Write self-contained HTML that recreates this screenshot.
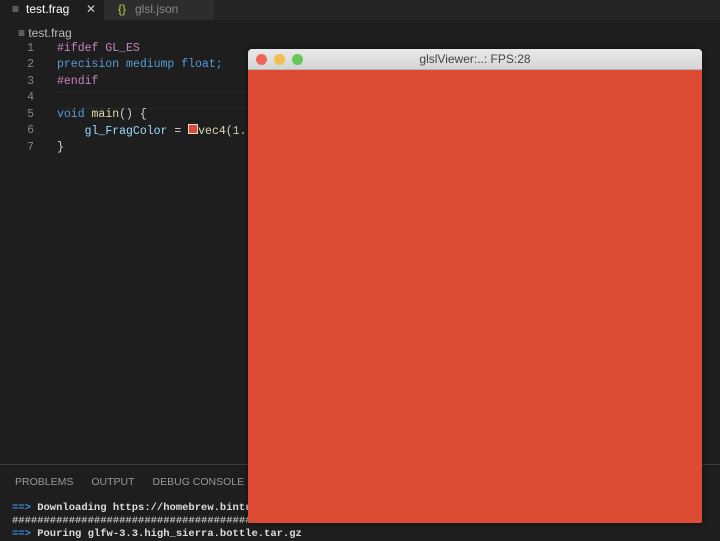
<!DOCTYPE html>
<html><head><style>
body{margin:0;width:720px;height:535px;background:#1e1e1e;overflow:hidden;position:relative;font-family:"Liberation Sans",sans-serif}
.tabs{position:absolute;left:0;top:0;width:720px;height:20px;background:#252526}
.tab{position:absolute;top:0;height:20px;font-size:12px;line-height:19px}
.code{position:absolute;left:0;top:42px;font-family:"Liberation Mono",monospace;font-size:11.5px}
.ln{position:absolute;left:0;width:34px;text-align:right;color:#858585}
.l{position:absolute;left:57px;white-space:pre;color:#d4d4d4}
.k{color:#569cd6}.p{color:#c586c0}.f{color:#dcdcaa}
</style></head><body>
<div class="tabs">
<div class="tab" style="left:0;width:104px;background:#1e1e1e;color:#fff"><span style="position:absolute;left:12px;color:#aaa">≡</span><span style="position:absolute;left:26px">test.frag</span><span style="position:absolute;left:86px;color:#ccc">✕</span></div>
<div class="tab" style="left:104px;width:110px;background:#2d2d2d;color:#888"><span style="position:absolute;left:14px;color:#cbcb41">{}</span><span style="position:absolute;left:31px">glsl.json</span></div>
</div>
<div style="position:absolute;left:18px;top:26px;font-size:12px;color:#bbb"><span style="color:#aaa">≡</span> test.frag</div>
<div style="position:absolute;left:57px;top:91px;width:200px;height:16px;border-top:1px solid #282828;border-bottom:1px solid #282828"></div>
<div class="code">
<div class="ln" style="top:0">1</div><div class="l p" style="top:0">#ifdef GL_ES</div>
<div class="ln" style="top:16px">2</div><div class="l k" style="top:16px">precision mediump float;</div>
<div class="ln" style="top:33px">3</div><div class="l p" style="top:33px">#endif</div>
<div class="ln" style="top:49px">4</div>
<div class="ln" style="top:66px">5</div><div class="l" style="top:66px"><span class="k">void</span> <span class="f">main</span>() {</div>
<div class="ln" style="top:82px">6</div><div class="l" style="top:82px">    <span style="color:#9cdcfe">gl_FragColor</span> = <span style="display:inline-block;width:8px;height:8px;background:#e04a35;border:1px solid #ddd"></span><span class="f">vec4</span>(<span style="color:#b5cea8">1.</span>,</div>
<div class="ln" style="top:99px">7</div><div class="l" style="top:99px">}</div>
</div>
<div style="position:absolute;left:0;top:464px;width:720px;height:1px;background:#3c3c3c"></div>
<div style="position:absolute;left:15px;top:476px;font-size:10.5px;color:#999;word-spacing:0">PROBLEMS<span style="margin-left:18px">OUTPUT</span><span style="margin-left:18px">DEBUG CONSOLE</span></div>
<div style="position:absolute;left:12px;top:502px;font-family:'Liberation Mono',monospace;font-size:10.5px;color:#ddd;line-height:13px;white-space:pre;font-weight:bold"><span style="color:#3b8eea">==&gt;</span> Downloading https://homebrew.bintray.com
<span style="font-weight:normal">##############################################################################  100.0%</span>
<span style="color:#3b8eea">==&gt;</span> Pouring glfw-3.3.high_sierra.bottle.tar.gz</div>
<div style="position:absolute;left:248px;top:49px;width:454px;height:474px;background:#dc4b32;border-radius:4px 4px 2px 2px;overflow:hidden;box-shadow:0 0 6px rgba(0,0,0,.5)">
<div style="height:20px;background:linear-gradient(#e9e9e9,#d5d5d5);border-bottom:1px solid #b5b5b5;text-align:center;font-size:12px;line-height:20px;color:#444">glslViewer:..: FPS:28</div>
<div style="position:absolute;left:8px;top:5px;width:11px;height:11px;border-radius:50%;background:#ec6559"></div>
<div style="position:absolute;left:26px;top:5px;width:11px;height:11px;border-radius:50%;background:#f2bf4f"></div>
<div style="position:absolute;left:44px;top:5px;width:11px;height:11px;border-radius:50%;background:#63c756"></div>
</div>
</body></html>
